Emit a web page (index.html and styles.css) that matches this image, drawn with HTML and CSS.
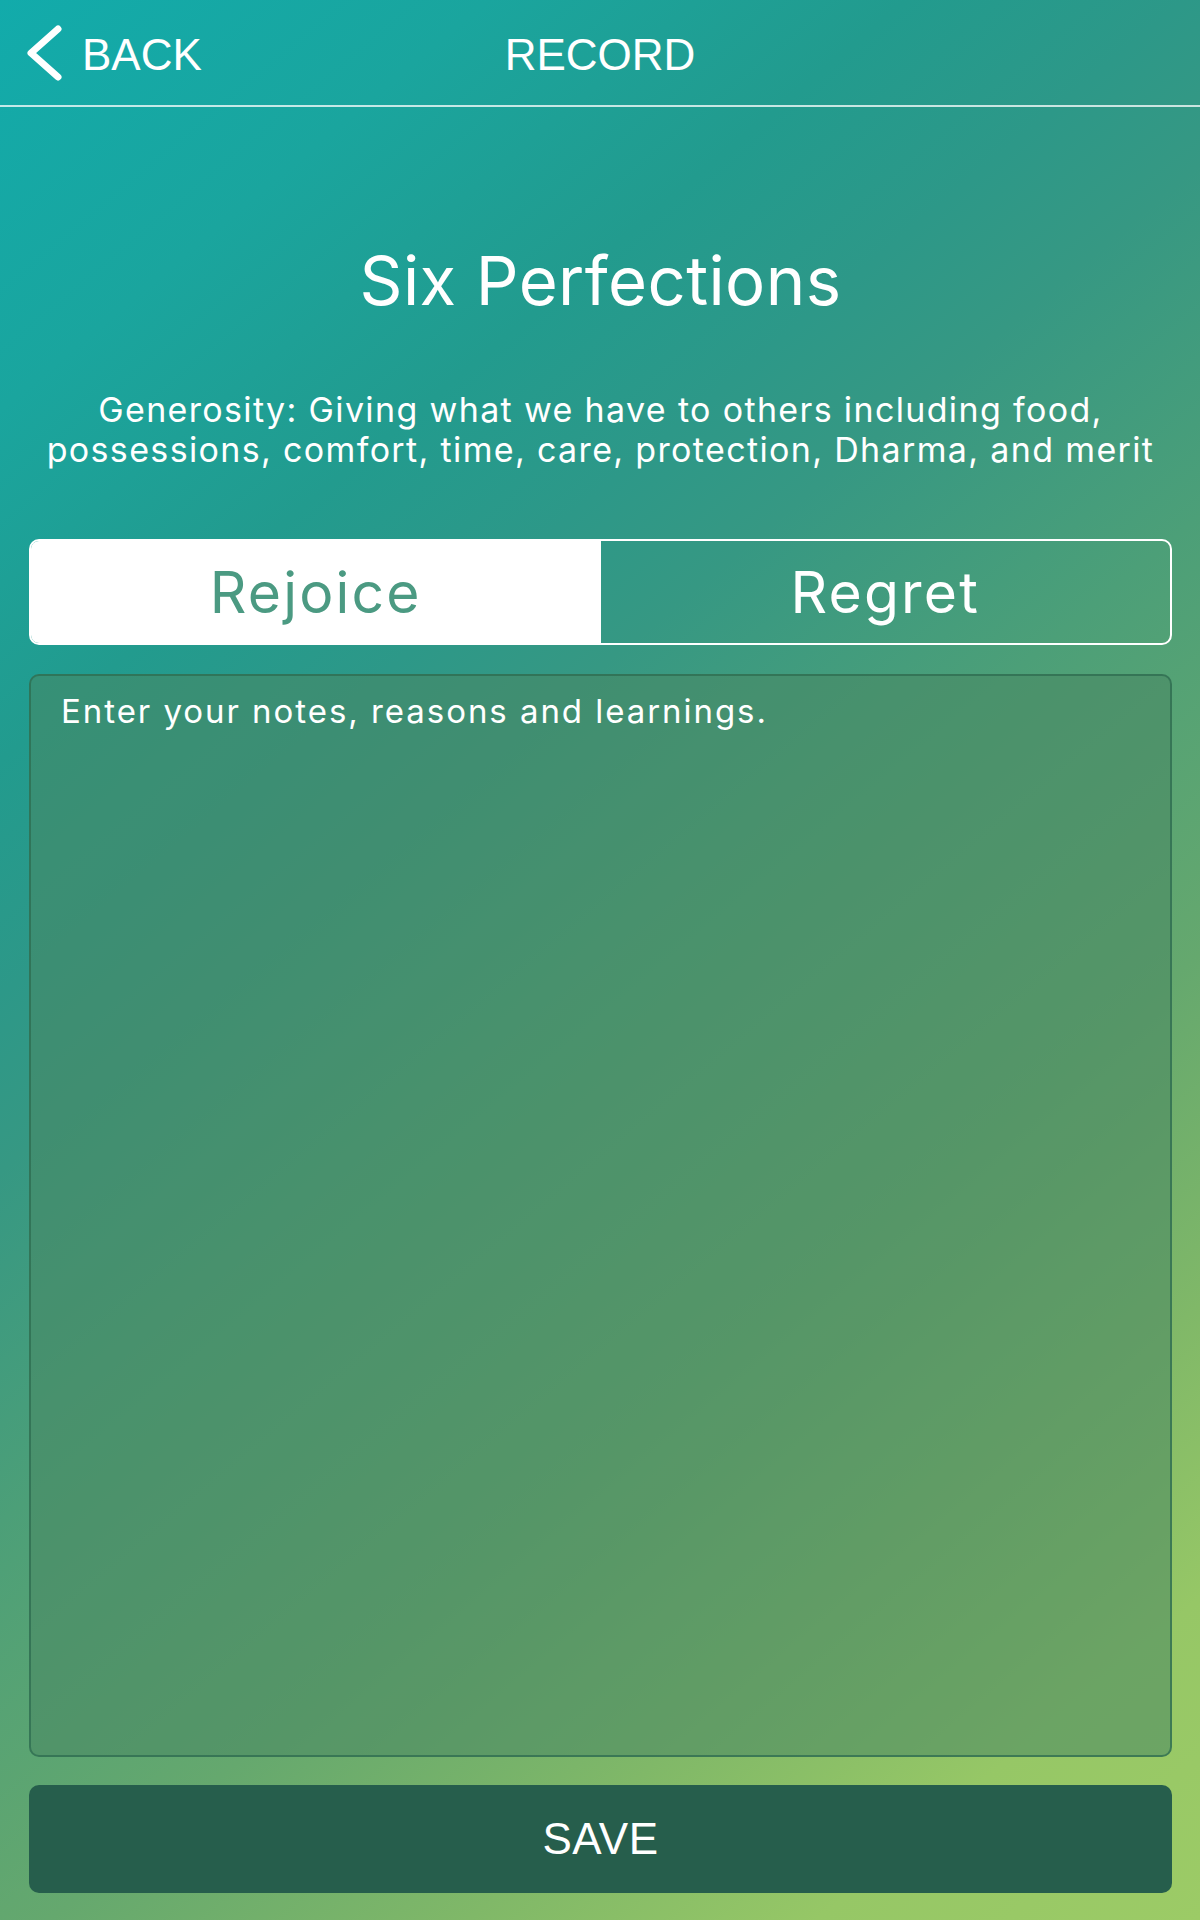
FILE: index.html
```html
<!DOCTYPE html>
<html lang="en">
<head>
<meta charset="utf-8">
<title>Record</title>
<link rel="stylesheet" href="styles.css">
</head>
<body>
<div class="screen">
  <header class="topbar">
    <a class="back" href="#">
      <svg class="chev" width="36" height="56" viewBox="0 0 36 56" aria-hidden="true">
        <path d="M32 4 L5 28 L32 52" fill="none" stroke="#fff" stroke-width="7" stroke-linecap="round" stroke-linejoin="round"/>
      </svg>
      <span>BACK</span>
    </a>
    <div class="bar-title">RECORD</div>
    <div class="spacer"></div>
  </header>

  <main class="content">
    <h1 class="title">Six Perfections</h1>
    <p class="desc">Generosity: Giving what we have to others including food, possessions, comfort, time, care, protection, Dharma, and merit</p>

    <div class="segment">
      <button class="seg seg-active">Rejoice</button>
      <button class="seg">Regret</button>
    </div>

    <textarea class="notes" placeholder="Enter your notes, reasons and learnings."></textarea>

    <button class="save">SAVE</button>
  </main>
</div>
</body>
</html>
```
FILE: styles.css
```css
html, body {
  margin: 0;
  padding: 0;
}
body {
  width: 1200px;
  min-height: 1920px;
  background: linear-gradient(140deg,
    #12abab 0%,
    #1aa59e 14%,
    #229b8e 26%,
    #2d9888 34%,
    #369883 40%,
    #4c9f78 52%,
    #65a86e 67%,
    #80b868 79%,
    #96c766 89%,
    #9ccb66 100%);
  font-family: Inter, "Noto Sans", sans-serif;
  color: #fff;
}
.screen {
  display: flex;
  flex-direction: column;
  min-height: 1920px;
}
.topbar {
  box-sizing: border-box;
  height: 107px;
  border-bottom: 2px solid rgba(255, 255, 255, 0.75);
  display: grid;
  grid-template-columns: 1fr auto 1fr;
  align-items: center;
  padding-top: 4px;
  font-family: "Liberation Sans", Arial, sans-serif;
  font-size: 44px;
}
.back {
  display: flex;
  align-items: center;
  gap: 20px;
  padding-left: 26px;
  color: #fff;
  text-decoration: none;
}
.chev {
  display: block;
  margin-top: -4px;
}
.bar-title {
  text-align: center;
}
.content {
  padding: 0 28px 0 29px;
  display: flex;
  flex-direction: column;
}
.title {
  margin: 134px 0 0 0;
  font-weight: 400;
  font-size: 67px;
  line-height: 80px;
  text-align: center;
  letter-spacing: 0.4px;
}
.desc {
  margin: 69px 0 0 0;
  font-size: 34px;
  line-height: 40px;
  text-align: center;
  letter-spacing: 1.35px;
}
.segment {
  margin-top: 69px;
  height: 106px;
  border: 2px solid #fff;
  border-radius: 10px;
  display: grid;
  grid-template-columns: 1fr 1fr;
  overflow: hidden;
  box-sizing: border-box;
}
.seg {
  border: 0;
  background: transparent;
  color: #fff;
  font-family: Inter, "Noto Sans", sans-serif;
  font-size: 57px;
  letter-spacing: 2.2px;
  padding: 0;
  margin: 0;
}
.seg-active {
  background: #fff;
  color: #4b9a82;
}
.notes {
  margin-top: 29px;
  height: 1083px;
  box-sizing: border-box;
  border: 2px solid rgba(45, 108, 80, 0.75);
  border-radius: 10px;
  background: rgba(72, 134, 98, 0.55);
  padding: 15px 30px;
  font-family: Inter, "Noto Sans", sans-serif;
  font-size: 33px;
  line-height: 40px;
  letter-spacing: 1.95px;
  color: #fff;
  resize: none;
  outline: none;
}
.notes::placeholder {
  color: #fff;
  opacity: 1;
}
.save {
  margin-top: 28px;
  height: 108px;
  border: 0;
  border-radius: 10px;
  background: #265e4c;
  color: #fff;
  font-family: "Liberation Sans", Arial, sans-serif;
  font-size: 44px;
  letter-spacing: 0.5px;
  padding: 0;
}
```
